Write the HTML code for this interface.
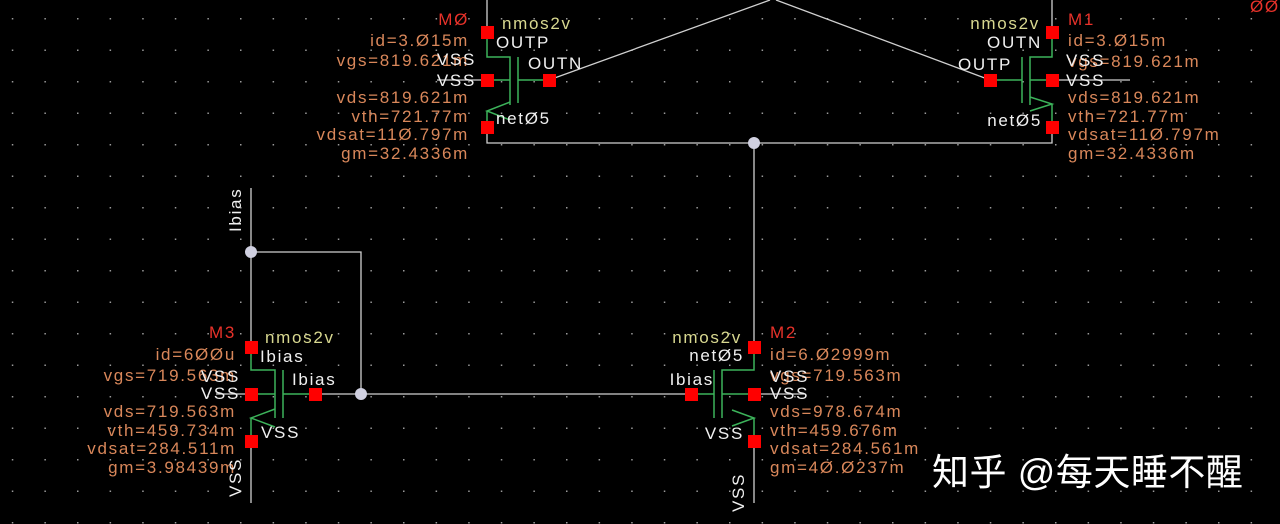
<!DOCTYPE html>
<html><head><meta charset="utf-8"><style>
html,body{margin:0;padding:0;background:#000;width:1280px;height:524px;overflow:hidden}
svg{display:block}
text{font-family:"Liberation Sans",sans-serif;font-size:17px;letter-spacing:1.7px}
.p{fill:#d9875a}.r{fill:#e8322a}.y{fill:#d8d890}.w{fill:#f0f0f0}
.g{stroke:#3cb35a;stroke-width:1.5;fill:none}
.l{stroke:#d0d0d0;stroke-width:1.3;fill:none}
.pin{fill:#f00}
</style></head><body>
<svg width="1280" height="524" viewBox="0 0 1280 524">
<defs><pattern id="d" x="77" y="18" width="32.6" height="31.5" patternUnits="userSpaceOnUse"><rect x="0" y="0" width="1.5" height="1.5" fill="#9a9a9a"/></pattern></defs>
<rect width="1280" height="524" fill="url(#d)"/>
<path class="l" d="M487 0V32 M487 127V143H1052V127 M1052 0V32 M754 143V347 M754 441V503 M549 80L770 0 M776 0L990 80 M437 80H487 M1052 80H1130
M251 188V347 M251 252H361V394 M315 394H691 M251 441V503 M216 394H251 M754 394H804"/>
<circle cx="754" cy="143" r="6" fill="#d0d0e0"/>
<circle cx="251" cy="252" r="6" fill="#d0d0e0"/>
<circle cx="361" cy="394" r="6" fill="#d0d0e0"/>
<path class="g" d="M487 32V57H510V105 M518 57V103 M518 80H549 M487 80H510 M510 102L487 111L510 120 M487 111V127"/>
<path class="g" d="M1052 32V57H1030V105 M1022 57V103 M990 80H1022 M1030 80H1052 M1030 97L1052 104L1030 111 M1052 104V127"/>
<path class="g" d="M251 347V370H275V418 M283 370V418 M283 394H315 M251 394H275 M275 409L251 418L275 427 M251 418V441"/>
<path class="g" d="M754 347V370H722V418 M714 370V418 M691 394H714 M722 394H754 M732 410L754 418L732 426 M754 418V441"/>
<g class="pin">
<rect x="481" y="26" width="13" height="13"/><rect x="481" y="74" width="13" height="13"/><rect x="543" y="74" width="13" height="13"/><rect x="481" y="121" width="13" height="13"/>
<rect x="1046" y="26" width="13" height="13"/><rect x="1046" y="74" width="13" height="13"/><rect x="984" y="74" width="13" height="13"/><rect x="1046" y="121" width="13" height="13"/>
<rect x="245" y="341" width="13" height="13"/><rect x="245" y="388" width="13" height="13"/><rect x="309" y="388" width="13" height="13"/><rect x="245" y="435" width="13" height="13"/>
<rect x="748" y="341" width="13" height="13"/><rect x="748" y="388" width="13" height="13"/><rect x="685" y="388" width="13" height="13"/><rect x="748" y="435" width="13" height="13"/>
</g>
<g text-anchor="end">
<text class="r" x="469" y="25">MØ</text>
<text class="p" x="469" y="46">id=3.Ø15m</text>
<text class="p" x="469" y="66">vgs=819.621m</text>
<text class="w" x="476" y="65">VSS</text>
<text class="w" x="476" y="86">VSS</text>
<text class="p" x="469" y="103">vds=819.621m</text>
<text class="p" x="469" y="122">vth=721.77m</text>
<text class="p" x="469" y="140">vdsat=11Ø.797m</text>
<text class="p" x="469" y="159">gm=32.4336m</text>
</g>
<text class="y" x="502" y="29">nmos2v</text>
<text class="w" x="496" y="48">OUTP</text>
<text class="w" x="528" y="69">OUTN</text>
<text class="w" x="496" y="124">netØ5</text>
<text class="r" x="1068" y="25">M1</text>
<text class="p" x="1068" y="46">id=3.Ø15m</text>
<text class="p" x="1068" y="67">vgs=819.621m</text>
<text class="w" x="1066" y="66">VSS</text>
<text class="w" x="1066" y="86">VSS</text>
<text class="p" x="1068" y="103">vds=819.621m</text>
<text class="p" x="1068" y="122">vth=721.77m</text>
<text class="p" x="1068" y="140">vdsat=11Ø.797m</text>
<text class="p" x="1068" y="159">gm=32.4336m</text>
<g text-anchor="end">
<text class="y" x="1040" y="29">nmos2v</text>
<text class="w" x="1042" y="48">OUTN</text>
<text class="w" x="1012" y="70">OUTP</text>
<text class="w" x="1042" y="126">netØ5</text>
</g>
<text class="r" x="1250" y="12">ØØ</text>
<g text-anchor="end">
<text class="r" x="236" y="338">M3</text>
<text class="p" x="236" y="360">id=6ØØu</text>
<text class="p" x="236" y="381">vgs=719.563m</text>
<text class="w" x="240" y="382">VSS</text>
<text class="w" x="240" y="399">VSS</text>
<text class="p" x="236" y="417">vds=719.563m</text>
<text class="p" x="236" y="436">vth=459.734m</text>
<text class="p" x="236" y="454">vdsat=284.511m</text>
<text class="p" x="236" y="473">gm=3.98439m</text>
</g>
<text class="y" x="265" y="343">nmos2v</text>
<text class="w" x="260" y="362">Ibias</text>
<text class="w" x="292" y="385">Ibias</text>
<text class="w" x="261" y="438">VSS</text>
<text class="w" transform="translate(241,232) rotate(-90)">Ibias</text>
<text class="w" transform="translate(241,497) rotate(-90)">VSS</text>
<text class="r" x="770" y="338">M2</text>
<text class="p" x="770" y="360">id=6.Ø2999m</text>
<text class="p" x="770" y="381">vgs=719.563m</text>
<text class="w" x="770" y="382">VSS</text>
<text class="w" x="770" y="399">VSS</text>
<text class="p" x="770" y="417">vds=978.674m</text>
<text class="p" x="770" y="436">vth=459.676m</text>
<text class="p" x="770" y="454">vdsat=284.561m</text>
<text class="p" x="770" y="473">gm=4Ø.Ø237m</text>
<g text-anchor="end">
<text class="y" x="742" y="343">nmos2v</text>
<text class="w" x="744" y="361">netØ5</text>
<text class="w" x="714" y="385">Ibias</text>
<text class="w" x="744" y="439">VSS</text>
</g>
<text class="w" transform="translate(744,512) rotate(-90)">VSS</text>
<text x="932" y="485" style="font-family:'Liberation Sans','Noto Sans CJK SC',sans-serif;font-size:37px;letter-spacing:0.5px;fill:#fff">知乎 @每天睡不醒</text>
</svg>
</body></html>
